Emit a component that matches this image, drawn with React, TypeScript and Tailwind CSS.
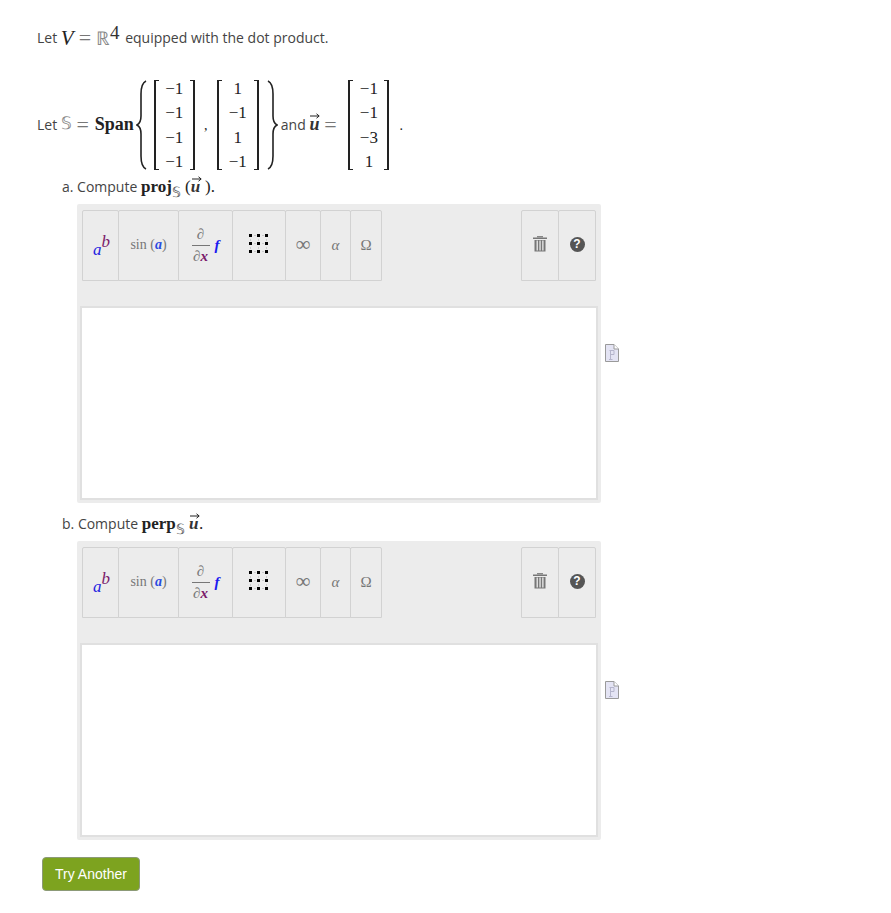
import React from "react";

const serif = "font-['Liberation_Serif',serif]";

function Matrix({ rows, w }: { rows: string[]; w: string }) {
  return (
    <div className={`relative flex flex-col h-[90px] pt-[3px] pb-[2px] ${w} ${serif} text-[17px] text-[#222] items-center justify-between`}>
      <span className="absolute left-0 top-0 bottom-0 w-[5px] border-l-2 border-t border-b border-l-[#222] border-[#222]" />
      <span className="absolute right-0 top-0 bottom-0 w-[5px] border-r-2 border-t border-b border-r-[#222] border-[#222]" />
      {rows.map((r, i) => (
        <span key={i} className="leading-[12px] w-full text-center">
          {r}
        </span>
      ))}
    </div>
  );
}

function Brace({ flip }: { flip?: boolean }) {
  return (
    <svg width="11" height="90" viewBox="0 0 11 90" className={flip ? "-scale-x-100" : ""}>
      <path
        d="M10 1 C6 3 5 7 5 14 L5 36 C5 41 3 44 1 45 C3 46 5 49 5 54 L5 76 C5 83 6 87 10 89"
        fill="none"
        stroke="#222"
        strokeWidth="1.6"
      />
    </svg>
  );
}

function Btn({ w, children }: { w: string; children?: React.ReactNode }) {
  return (
    <div className={`${w} h-[71px] border border-[#d2d2d2] -ml-px first:ml-0 flex items-center justify-center rounded-t-[2px] ${serif} text-[#777]`}>
      {children}
    </div>
  );
}

function MatrixIcon() {
  const pos = [0, 8, 16];
  return (
    <svg width="20" height="20" viewBox="0 0 20 20" className="-mt-[3px]">
      {pos.map((y) =>
        pos.map((x) => <rect key={`${x}-${y}`} x={x} y={y} width="3" height="3" fill="#000" />)
      )}
      {[5.5, 13.5].map((y) =>
        [1, 9, 17].map((x) => <rect key={`a${x}-${y}`} x={x} y={y} width="1" height="1" fill="#aaa" />)
      )}
      {[1, 9, 17].map((y) =>
        [5.5, 13.5].map((x) => <rect key={`b${x}-${y}`} x={x} y={y} width="1" height="1" fill="#aaa" />)
      )}
    </svg>
  );
}

function TrashIcon() {
  return (
    <svg width="14" height="16" viewBox="0 0 14 16" className="-mt-[3px]">
      <rect x="0" y="1.5" width="14" height="1.5" fill="#777" />
      <rect x="4" y="0" width="6" height="1.5" fill="#888" />
      <path d="M1.5 4 H12.5 V15.5 H1.5 Z" fill="#777" />
      <rect x="3.5" y="4.5" width="1.5" height="10" fill="#ddd" />
      <rect x="6.3" y="4.5" width="1.5" height="10" fill="#ddd" />
      <rect x="9.1" y="4.5" width="1.5" height="10" fill="#ddd" />
    </svg>
  );
}

function Editor() {
  return (
    <div className="ml-[40px] w-[524px] h-[299px] bg-[#ececec] rounded-[2px] relative flex flex-col px-[3px] pb-[3px] pt-[6px]">
      <div className="flex justify-between px-[2px] h-[71px]">
        <div className="flex">
          <Btn w="w-[37px]">
            <span className="italic text-[17px] text-[#1f1fe0] mt-[9px] ml-[2px]">a</span>
            <span className="italic text-[17px] text-[#7a1a6a] mb-[7px]">b</span>
          </Btn>
          <Btn w="w-[61px]">
            <span className="text-[14px] -mt-[2px]">
              sin (<span className="italic font-bold text-[#2a4ae0]">a</span>)
            </span>
          </Btn>
          <Btn w="w-[55px]">
            <span className="flex flex-col items-center text-[15px] leading-[15px] italic">
              <span className="border-b border-[#777] w-[18px] text-center pb-[3px] not-italic">∂</span>
              <span className="pt-[3px]">
                ∂<span className="text-[#7a1a6a] font-bold">x</span>
              </span>
            </span>
            <span className="italic font-bold text-[15px] text-[#1a1af0] ml-[5px]">f</span>
          </Btn>
          <Btn w="w-[54px]">
            <MatrixIcon />
          </Btn>
          <Btn w="w-[36px]">
            <span className="text-[21px] -mt-[2px]">∞</span>
          </Btn>
          <Btn w="w-[31px]">
            <span className="italic text-[15px]">α</span>
          </Btn>
          <Btn w="w-[32px]">
            <span className="text-[15px]">Ω</span>
          </Btn>
        </div>
        <div className="flex">
          <Btn w="w-[38px]">
            <TrashIcon />
          </Btn>
          <Btn w="w-[38px]">
            <span className="w-[15px] h-[15px] rounded-full bg-[#555] text-white text-[12px] font-bold leading-[15px] text-center font-['Liberation_Sans',sans-serif] -mt-[2px]">
              ?
            </span>
          </Btn>
        </div>
      </div>
      <div className="mt-[25px] flex-1 bg-white border-2 border-[#e0e0e0]" />
      <svg width="14" height="18" viewBox="0 0 14 18" className="absolute left-[528px] top-[140px]">
        <path d="M0.5 0.5 H9 L13.5 5 V17.5 H0.5 Z" fill="#e4e4f4" stroke="#9a9a9a" />
        <path d="M9 0.5 V5 H13.5" fill="#fff" stroke="#9a9a9a" />
        <path d="M4.5 6.5 H9 V10.5 H5.5 M5.5 6.5 V15.5 M4 15.5 H7.5" fill="none" stroke="#b5b5cc" />
      </svg>
    </div>
  );
}

function Sub({ children }: { children: React.ReactNode }) {
  return <span className="text-[14px] relative top-[5px] text-[#555]">{children}</span>;
}

const vec = (
  <span className="relative italic font-bold inline-block w-[10px] leading-[18px] text-[#333]">
    u
    <svg width="10" height="6" viewBox="0 0 10 6" className="absolute left-[1px] -top-[2px]">
      <path d="M0 3 H9 M6.5 0.8 L9.2 3 L6.5 5.2" fill="none" stroke="#222" strokeWidth="1" />
    </svg>
  </span>
);

export default function App() {
  return (
    <div className="w-[891px] h-[913px] bg-white text-[14px] text-[#444] font-['Open_Sans',sans-serif] pl-[37px] relative overflow-hidden">
      <div className="pt-[25px] h-[80px] flex items-start leading-[25px]">
        <span>Let&nbsp;</span>
        <span className={`${serif} text-[19px] text-[#222] flex items-baseline`}>
          <span className="italic text-[21px]">V</span>
          <span className="text-[#777] text-[22px] mx-[5px]">=</span>
          <span className="text-[#888]">ℝ</span>
          <span className="text-[19px] relative -top-[6px] text-[#333] mr-[2px]">4</span>
        </span>
        <span>&nbsp;equipped with the dot product.</span>
      </div>

      <div className="flex items-center h-[90px] text-[14px]">
        <span className="-mt-[2px]">Let&nbsp;</span>
        <span className={`${serif} text-[17px] text-[#888] -mt-[2px]`}>𝕊</span>
        <span className={`${serif} text-[22px] text-[#777] w-[14px] ml-[4px] mr-[5px] text-center -mt-[2px]`}>=</span>
        <span className={`${serif} text-[18px] font-bold text-[#222] w-[41px] -mt-[2px]`}>Span</span>
        <Brace />
        <div className="w-[7px]" />
        <Matrix w="w-[41px]" rows={["−1", "−1", "−1", "−1"]} />
        <span className={`${serif} w-[22px] text-center text-[#222]`}>,</span>
        <Matrix w="w-[42px]" rows={["1", "−1", "1", "−1"]} />
        <div className="w-[8px]" />
        <Brace flip />
        <span className="ml-[3px] -mt-[2px]">and&nbsp;</span>
        <span className={`${serif} text-[18px] text-[#222] -mt-[2px]`}>{vec}</span>
        <span className={`${serif} text-[22px] text-[#777] w-[14px] ml-[4px] mr-[11px] text-center -mt-[2px]`}>=</span>
        <Matrix w="w-[41px]" rows={["−1", "−1", "−3", "1"]} />
        <span className={`${serif} ml-[10px] text-[#222]`}>.</span>
      </div>

      <div className="ml-[25px] h-[34px] leading-[34px] flex">
        <span>a. Compute&nbsp;</span>
        <span className={`${serif} text-[17px] text-[#222]`}>
          <b>proj</b>
          <Sub>𝕊</Sub> ({vec} ).
        </span>
      </div>
      <Editor />

      <div className="ml-[25px] h-[38px] leading-[41px] flex">
        <span>b. Compute&nbsp;</span>
        <span className={`${serif} text-[17px] text-[#222]`}>
          <b>perp</b>
          <Sub>𝕊</Sub> {vec}.
        </span>
      </div>
      <Editor />

      <button className="ml-[5px] mt-[17px] block w-[98px] h-[34px] rounded-[4px] bg-[#7da31f] border border-[#8c9a78] text-white text-[14px] font-['Liberation_Sans',sans-serif]">
        Try Another
      </button>
    </div>
  );
}
